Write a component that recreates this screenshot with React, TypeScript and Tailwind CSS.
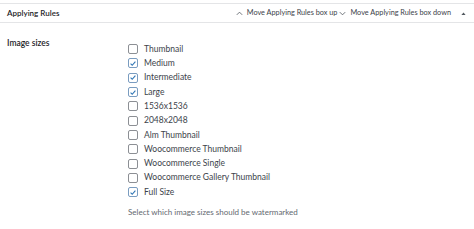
const SIZES = [
  { label: 'Thumbnail', checked: false },
  { label: 'Medium', checked: true },
  { label: 'Intermediate', checked: true },
  { label: 'Large', checked: true },
  { label: '1536x1536', checked: false },
  { label: '2048x2048', checked: false },
  { label: 'Alm Thumbnail', checked: false },
  { label: 'Woocommerce Thumbnail', checked: false },
  { label: 'Woocommerce Single', checked: false },
  { label: 'Woocommerce Gallery Thumbnail', checked: false },
  { label: 'Full Size', checked: true },
];

function Box({ checked }: { checked: boolean }) {
  return (
    <span
      className={`w-[10px] h-[10px] rounded-[2px] border bg-white flex items-center justify-center shrink-0 ${
        checked ? 'border-[#7a9cc0]' : 'border-[#8c8f94]'
      }`}
    >
      {checked && (
        <svg width="9" height="9" viewBox="0 0 20 20">
          <path d="M4 10.5l4 4 8-9" fill="none" stroke="#2f75b5" strokeWidth="2.8" />
        </svg>
      )}
    </span>
  );
}

export default function App() {
  return (
    <div className="w-[474px] h-[229px] bg-white overflow-hidden text-[#1d2327]" style={{ fontFamily: 'Lato, sans-serif' }}>
      <div className="mt-[3px] border-t border-[#e4e5e7]">
        <div className="h-[19px] flex items-center justify-between border-b border-[#e4e5e7] pl-[7px] pr-[7px]">
          <span className="text-[8px] font-semibold">Applying Rules</span>
          <div className="flex items-center text-[7.3px] text-[#3c434a]">
            <svg width="9" height="9" viewBox="0 0 20 20" className="mr-[3px]">
              <path d="M4 13l6-6 6 6" fill="none" stroke="#50575e" strokeWidth="1.8" />
            </svg>
            <span className="mr-[1px]">Move Applying Rules box up</span>
            <svg width="9" height="9" viewBox="0 0 20 20" className="mr-[3px]">
              <path d="M4 7l6 6 6-6" fill="none" stroke="#50575e" strokeWidth="1.8" />
            </svg>
            <span className="mr-[9px]">Move Applying Rules box down</span>
            <svg width="7" height="7" viewBox="0 0 20 20">
              <path d="M4 14l6-7 6 7z" fill="#50575e" />
            </svg>
          </div>
        </div>
        <div className="flex pt-[14px] pl-[7px]">
          <div className="w-[121px] text-[8.5px] font-semibold">Image sizes</div>
          <div className="flex flex-col pt-[5px] text-[8.5px] text-[#3c434a]">
            {SIZES.map(s => (
              <div key={s.label} className="h-[14.3px] flex items-center gap-[6px]">
                <Box checked={s.checked} />
                <span>{s.label}</span>
              </div>
            ))}
            <div className="mt-[7px] text-[8px] text-[#646970]">Select which image sizes should be watermarked</div>
          </div>
        </div>
      </div>
    </div>
  );
}
